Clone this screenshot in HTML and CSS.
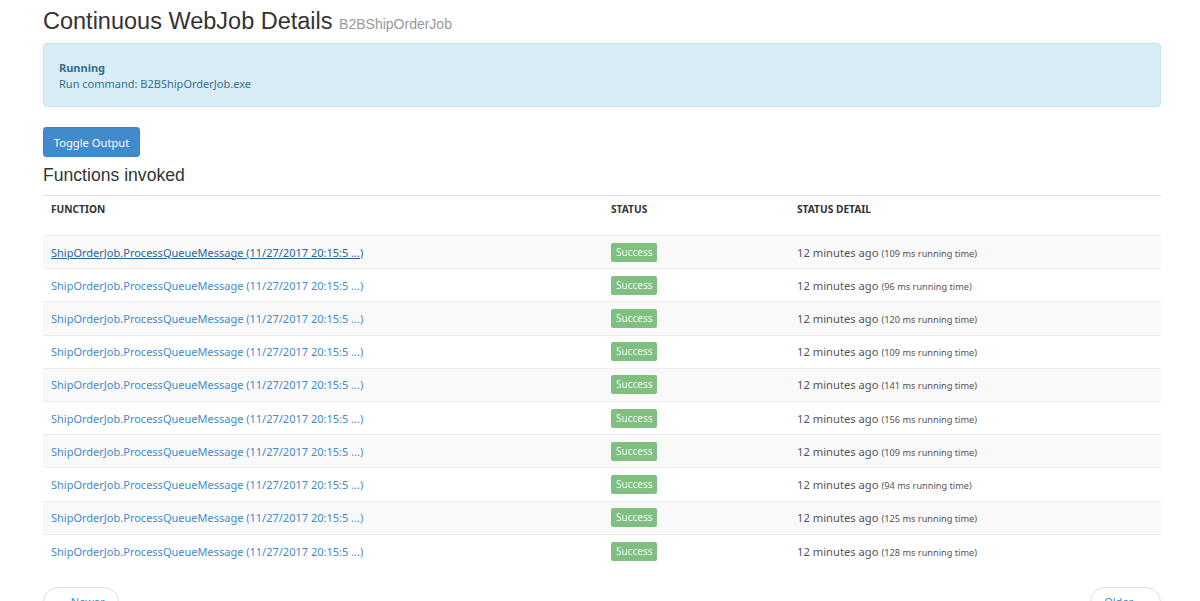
FILE: index.html
```html
<!DOCTYPE html>
<html>
<head>
<meta charset="utf-8">
<link rel="stylesheet" href="styles.css">
</head>
<body>
<div class="container">
  <h2 class="title">Continuous WebJob Details <small>B2BShipOrderJob</small></h2>
  <div class="alert">
    <div class="alert-strong">Running</div>
    <div>Run command: B2BShipOrderJob.exe</div>
  </div>
  <button class="btn">Toggle Output</button>
  <h3 class="section">Functions invoked</h3>
  <table class="table">
    <thead>
      <tr><th class="c1">FUNCTION</th><th class="c2">STATUS</th><th class="c3">STATUS DETAIL</th></tr>
    </thead>
    <tbody>
      <tr><td><a class="hover">ShipOrderJob.ProcessQueueMessage (11/27/2017 20:15:5 ...)</a></td><td><span class="badge">Success</span></td><td><span class="ago">12 minutes ago</span> <span class="rt">(109 ms running time)</span></td></tr>
      <tr><td><a>ShipOrderJob.ProcessQueueMessage (11/27/2017 20:15:5 ...)</a></td><td><span class="badge">Success</span></td><td><span class="ago">12 minutes ago</span> <span class="rt">(96 ms running time)</span></td></tr>
      <tr><td><a>ShipOrderJob.ProcessQueueMessage (11/27/2017 20:15:5 ...)</a></td><td><span class="badge">Success</span></td><td><span class="ago">12 minutes ago</span> <span class="rt">(120 ms running time)</span></td></tr>
      <tr><td><a>ShipOrderJob.ProcessQueueMessage (11/27/2017 20:15:5 ...)</a></td><td><span class="badge">Success</span></td><td><span class="ago">12 minutes ago</span> <span class="rt">(109 ms running time)</span></td></tr>
      <tr><td><a>ShipOrderJob.ProcessQueueMessage (11/27/2017 20:15:5 ...)</a></td><td><span class="badge">Success</span></td><td><span class="ago">12 minutes ago</span> <span class="rt">(141 ms running time)</span></td></tr>
      <tr><td><a>ShipOrderJob.ProcessQueueMessage (11/27/2017 20:15:5 ...)</a></td><td><span class="badge">Success</span></td><td><span class="ago">12 minutes ago</span> <span class="rt">(156 ms running time)</span></td></tr>
      <tr><td><a>ShipOrderJob.ProcessQueueMessage (11/27/2017 20:15:5 ...)</a></td><td><span class="badge">Success</span></td><td><span class="ago">12 minutes ago</span> <span class="rt">(109 ms running time)</span></td></tr>
      <tr><td><a>ShipOrderJob.ProcessQueueMessage (11/27/2017 20:15:5 ...)</a></td><td><span class="badge">Success</span></td><td><span class="ago">12 minutes ago</span> <span class="rt">(94 ms running time)</span></td></tr>
      <tr><td><a>ShipOrderJob.ProcessQueueMessage (11/27/2017 20:15:5 ...)</a></td><td><span class="badge">Success</span></td><td><span class="ago">12 minutes ago</span> <span class="rt">(125 ms running time)</span></td></tr>
      <tr><td><a>ShipOrderJob.ProcessQueueMessage (11/27/2017 20:15:5 ...)</a></td><td><span class="badge">Success</span></td><td><span class="ago">12 minutes ago</span> <span class="rt">(128 ms running time)</span></td></tr>
    </tbody>
  </table>
  <div class="pager">
    <a class="pill">&larr; Newer</a>
    <a class="pill">Older &rarr;</a>
  </div>
</div>
</body>
</html>
```
FILE: styles.css
```css
html, body {
  margin: 0;
  padding: 0;
  background: #fff;
}
body {
  font-family: "Noto Sans", "Open Sans", sans-serif;
  font-size: 12px;
  color: #333;
}
.container {
  width: 1118px;
  margin: 0 0 0 43px;
}
.title {
  font-family: "Liberation Sans", Arial, sans-serif;
  font-weight: normal;
  font-size: 23.5px;
  color: #333;
  margin: 0;
  padding-top: 8px;
  height: 35px;
  line-height: 26px;
}
.title small {
  font-size: 14px;
  color: #999;
}
.alert {
  box-sizing: border-box;
  height: 64px;
  background: #d9edf7;
  border: 1px solid #bce8f1;
  border-radius: 4px;
  color: #31708f;
  padding: 16px 15px 0 15px;
  font-size: 11px;
  line-height: 16px;
}
.alert-strong {
  font-weight: bold;
}
.btn {
  display: block;
  margin-top: 20px;
  height: 30px;
  width: 97px;
  padding: 0;
  background: #428bca;
  border: 1px solid #3d84c2;
  border-radius: 3px;
  color: #fff;
  font-family: "Noto Sans", "Open Sans", sans-serif;
  font-size: 11.2px;
}
.section {
  font-family: "Liberation Sans", Arial, sans-serif;
  font-weight: normal;
  font-size: 17.6px;
  color: #333;
  margin: 0;
  height: 38px;
  line-height: 36px;
}
.table {
  width: 100%;
  border-collapse: collapse;
  border-top: 1px solid #ddd;
}
.table th {
  text-align: left;
  font-size: 10.2px;
  font-weight: bold;
  color: #333;
  padding: 0 8px;
  height: 40px;
  vertical-align: top;
  padding-top: 6px;
  box-sizing: border-box;
}
.c1 { width: 560px; }
.c2 { width: 186px; }
.table td {
  height: 33.2px;
  padding: 0 8px;
  border-top: 1px solid #eee;
  vertical-align: middle;
  box-sizing: border-box;
}
.table tbody tr:nth-child(odd) td {
  background: #f9f9f9;
}
.table a {
  color: #428bca;
  text-decoration: none;
  font-size: 11px;
}
.table a.hover {
  color: #2a6496;
  text-decoration: underline;
}
.badge {
  display: inline-block;
  background: #7fbf7f;
  color: #f4fbf4;
  font-size: 10px;
  padding: 0 5px;
  height: 19px;
  line-height: 19px;
  border-radius: 2px;
  width: 46px;
  box-sizing: border-box;
  text-align: center;
}
.ago {
  color: #555;
  font-size: 11.2px;
}
.rt {
  color: #555;
  font-size: 9.2px;
}
.pager {
  display: flex;
  justify-content: space-between;
  margin-top: 20px;
}
.pill {
  display: inline-block;
  border: 1px solid #ddd;
  border-radius: 15px;
  padding: 5px 13px;
  color: #428bca;
  font-size: 11px;
  line-height: 18px;
}
```
